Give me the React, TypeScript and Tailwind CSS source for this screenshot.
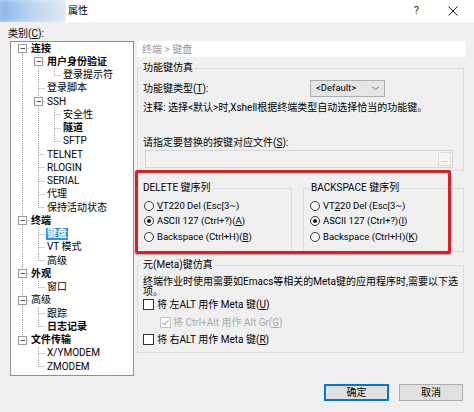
import React from "react";

type TNode = {
  label: string;
  level: number;
  bold?: boolean;
  expander?: boolean;
  selected?: boolean;
};

const nodes: TNode[] = [
  { label: "连接", level: 0, bold: true, expander: true },
  { label: "用户身份验证", level: 1, bold: true, expander: true },
  { label: "登录提示符", level: 2 },
  { label: "登录脚本", level: 1 },
  { label: "SSH", level: 1, expander: true },
  { label: "安全性", level: 2 },
  { label: "隧道", level: 2, bold: true },
  { label: "SFTP", level: 2 },
  { label: "TELNET", level: 1 },
  { label: "RLOGIN", level: 1 },
  { label: "SERIAL", level: 1 },
  { label: "代理", level: 1 },
  { label: "保持活动状态", level: 1 },
  { label: "终端", level: 0, bold: true, expander: true },
  { label: "键盘", level: 1, bold: true, selected: true },
  { label: "VT 模式", level: 1 },
  { label: "高级", level: 1 },
  { label: "外观", level: 0, bold: true, expander: true },
  { label: "窗口", level: 1 },
  { label: "高级", level: 0, expander: true },
  { label: "跟踪", level: 1 },
  { label: "日志记录", level: 1, bold: true },
  { label: "文件传输", level: 0, bold: true, expander: true },
  { label: "X/YMODEM", level: 1 },
  { label: "ZMODEM", level: 1 },
];

function hasLaterSibling(i: number, level: number) {
  for (let j = i + 1; j < nodes.length; j++) {
    if (nodes[j].level < level) return false;
    if (nodes[j].level === level) return true;
  }
  return false;
}

const LINE = "#a3a3a3";

function TreeRow({ node, index }: { node: TNode; index: number }) {
  const L = node.level;
  const W = 16 * (L + 1);
  const H = 13.25;
  const cy = 6.5;
  const cx = 16 * L + 8.5;
  const parts: React.ReactNode[] = [];
  for (let a = 0; a < L; a++) {
    if (hasLaterSibling(index, a)) {
      const x = 16 * a + 8.5;
      parts.push(<line key={"a" + a} x1={x} y1={0} x2={x} y2={H} />);
    }
  }
  if (index > 0) parts.push(<line key="t" x1={cx} y1={0} x2={cx} y2={cy} />);
  if (hasLaterSibling(index, L)) parts.push(<line key="b" x1={cx} y1={cy} x2={cx} y2={H} />);
  parts.push(<line key="h" x1={cx} y1={cy} x2={W - 1} y2={cy} />);
  return (
    <div className="flex h-[13.25px] items-center">
      <svg width={W} height={H} viewBox={`0 0 ${W} ${H}`} className="shrink-0">
        <g stroke={LINE} strokeWidth="1" strokeDasharray="1 1" fill="none">
          {parts}
        </g>
        {node.expander && (
          <g>
            <rect x={cx - 4} y={cy - 4} width="8" height="8" fill="#fff" stroke="#9a9a9a" strokeWidth="1" />
            <line x1={cx - 2} y1={cy} x2={cx + 2.5} y2={cy} stroke="#555" strokeWidth="1" />
          </g>
        )}
      </svg>
      <span
        className={
          node.selected
            ? "ml-[0px] whitespace-nowrap bg-[#3390e6] px-[1px] leading-[12px] font-bold text-white"
            : node.bold
            ? "ml-[1px] whitespace-nowrap leading-[12px] font-bold"
            : "ml-[1px] whitespace-nowrap leading-[12px]"
        }
      >
        {node.label}
      </span>
    </div>
  );
}

function Radio({ checked }: { checked?: boolean }) {
  return (
    <span className="flex h-[10px] w-[10px] shrink-0 items-center justify-center rounded-full border border-[#333] bg-white">
      {checked && <span className="h-[4px] w-[4px] rounded-full bg-[#1a1a1a]" />}
    </span>
  );
}

function Check({ checked, disabled }: { checked?: boolean; disabled?: boolean }) {
  return (
    <span
      className={
        disabled
          ? "flex h-[11px] w-[11px] shrink-0 items-center justify-center border border-[#c4c4c4] bg-white"
          : "flex h-[11px] w-[11px] shrink-0 items-center justify-center border border-[#333] bg-white"
      }
    >
      {checked && (
        <svg width="9" height="9" viewBox="0 0 9 9">
          <path d="M1.5 4.6 L3.6 6.7 L7.6 2.2" fill="none" stroke={disabled ? "#b4b4b4" : "#222"} strokeWidth="1.2" />
        </svg>
      )}
    </span>
  );
}

function U({ children }: { children: React.ReactNode }) {
  return <span className="underline underline-offset-[1px]">{children}</span>;
}

function RadioRow({ checked, children }: { checked?: boolean; children: React.ReactNode }) {
  return (
    <div className="flex h-[15.5px] items-center gap-[3px] whitespace-nowrap text-[9.5px]">
      <Radio checked={checked} />
      <span>{children}</span>
    </div>
  );
}

export default function App() {
  return (
    <div className="relative flex h-[412px] w-[474px] flex-col overflow-hidden bg-[#f0f0f0] font-['Roboto','Noto_Sans_CJK_SC',sans-serif] text-[10px] text-black">
      {/* title bar */}
      <div className="flex h-[22px] shrink-0 items-center bg-white">
        <div className="h-full w-[66px] overflow-hidden">
          <div className="h-[26px] w-[72px] -translate-x-[3px] -translate-y-[2px] bg-linear-to-r from-[#86b4e6] via-[#bcd5f1] to-[#e4ecf6] blur-[3px]" />
        </div>
        <span className="ml-[2px] text-[10px] leading-[12px]">属性</span>
        <div className="flex-1" />
        <span className="mr-[29px] text-[11px] leading-[12px] text-[#222]">?</span>
        <svg width="10" height="10" viewBox="0 0 10 10" className="mr-[16px]">
          <path d="M0.5 0.5 L9.5 9.5 M9.5 0.5 L0.5 9.5" stroke="#222" strokeWidth="1" />
        </svg>
      </div>

      {/* label */}
      <div className="h-[19px] shrink-0 pl-[8px] pt-[5px] leading-[13px]">
        类别(<U>C</U>):
      </div>

      {/* main */}
      <div className="flex h-[335px] shrink-0">
        <div className="ml-[10px] h-full w-[124px] overflow-hidden border border-[#8f8f8f] bg-white pl-[3px]">
          {nodes.map((n, i) => (
            <TreeRow key={i} node={n} index={i} />
          ))}
        </div>

        <div className="ml-[3px] flex w-[329px] flex-col">
          <div className="flex h-[16px] items-center bg-white pl-[5px] text-[#9a9a9a]">终端 &gt; 键盘</div>

          {/* function key emulation */}
          <fieldset className="mt-[5px] w-[327px] border border-[#dcdcdc] pb-[2px]">
            <legend className="ml-[3px] px-[2px] leading-[12px]">功能键仿真</legend>
            <div className="flex h-[17px] items-center pl-[5px] mt-[6px]">
              <span className="w-[167px] leading-[12px]">
                功能键类型(<U>T</U>):
              </span>
              <div className="flex h-[17px] w-[75px] items-center justify-between border border-[#adadad] bg-[#e5e5e5] pl-[5px] pr-[5px] text-[9.5px]">
                <span>&lt;Default&gt;</span>
                <svg width="7" height="5" viewBox="0 0 7 5">
                  <path d="M0.5 0.8 L3.5 3.8 L6.5 0.8" fill="none" stroke="#6a6a6a" strokeWidth="1" />
                </svg>
              </div>
            </div>
            <div className="mt-[5px] whitespace-nowrap pl-[5px] leading-[12px]">
              注释: 选择&lt;默认&gt;时,Xshell根据终端类型自动选择恰当的功能键。
            </div>
            <div className="mt-[23px] pl-[5px] leading-[12px]">
              请指定要替换的按键对应文件(<U>S</U>):
            </div>
            <div className="ml-[7px] mt-[1px] flex h-[18px] w-[308px] justify-end border border-[#d6d6d6] bg-[#f2f2f2]">
              <div className="m-[1px] flex w-[13px] items-end justify-center border border-[#dcdcdc] bg-[#f4f4f4] pb-[1px] text-[8px] leading-[8px] text-[#8a8a8a]">
                ...
              </div>
            </div>
          </fieldset>

          {/* DELETE / BACKSPACE */}
          <div className="mt-[11px] flex gap-[11px]">
            <fieldset className="w-[155px] border border-[#dcdcdc] pb-[6px] pl-[6px]">
              <legend className="-ml-[3px] px-[2px] leading-[12px]">DELETE 键序列</legend>
              <div className="pt-[4px]">
                <RadioRow>
                  <U>V</U>T220 Del (Esc[3~)
                </RadioRow>
                <RadioRow checked>
                  ASCII 127 (Ctrl+?)(<U>A</U>)
                </RadioRow>
                <RadioRow>
                  Backspace (Ctrl+H)(<U>B</U>)
                </RadioRow>
              </div>
            </fieldset>
            <fieldset className="w-[161px] border border-[#dcdcdc] pb-[6px] pl-[6px]">
              <legend className="-ml-[1px] px-[2px] leading-[12px]">BACKSPACE 键序列</legend>
              <div className="pt-[4px]">
                <RadioRow>
                  VT<U>2</U>20 Del (Esc[3~)
                </RadioRow>
                <RadioRow checked>
                  ASCII 127 (Ctrl+?)(<U>I</U>)
                </RadioRow>
                <RadioRow>
                  Backspace (Ctrl+H)(<U>K</U>)
                </RadioRow>
              </div>
            </fieldset>
          </div>

          {/* Meta */}
          <fieldset className="mt-[7.5px] w-[327px] border border-[#dcdcdc] pb-[3px]">
            <legend className="ml-[3px] px-[2px] leading-[12px]">元(Meta)键仿真</legend>
            <div className="pl-[5px] pt-[6px] leading-[9.5px]">
              <div className="whitespace-nowrap">终端作业时使用需要如Emacs等相关的Meta键的应用程序时,需要以下选</div>
              <div>项。</div>
            </div>
            <div className="flex h-[17.5px] items-center gap-[3px] whitespace-nowrap pl-[5px]">
              <Check />
              <span>
                将 左ALT 用作 Meta 键(<U>U</U>)
              </span>
            </div>
            <div className="flex h-[17.5px] items-center gap-[2px] whitespace-nowrap pl-[22px] text-[#a8a8a8]">
              <Check checked disabled />
              <span>
                将 Ctrl+Alt 用作 Alt Gr(<U>G</U>)
              </span>
            </div>
            <div className="flex h-[17.5px] items-center gap-[3px] whitespace-nowrap pl-[5px]">
              <Check />
              <span>
                将 右ALT 用作 Meta 键(<U>R</U>)
              </span>
            </div>
          </fieldset>
        </div>
      </div>

      {/* buttons */}
      <div className="mt-[8px] flex shrink-0 justify-end gap-[10px] pr-[11px]">
        <button className="flex h-[17px] w-[65px] items-center justify-center border-2 border-[#0078d7] bg-[#e1e1e1] leading-[12px]">
          确定
        </button>
        <button className="flex h-[17px] w-[64px] items-center justify-center border border-[#adadad] bg-[#e1e1e1] leading-[12px]">
          取消
        </button>
      </div>

      {/* red annotation box */}
      <div className="pointer-events-none absolute left-[135px] top-[170px] h-[84px] w-[316px] rounded-[2px] border-[3px] border-[#de1f22] shadow-[0_1px_2px_rgba(0,0,0,0.35)]" />
    </div>
  );
}
